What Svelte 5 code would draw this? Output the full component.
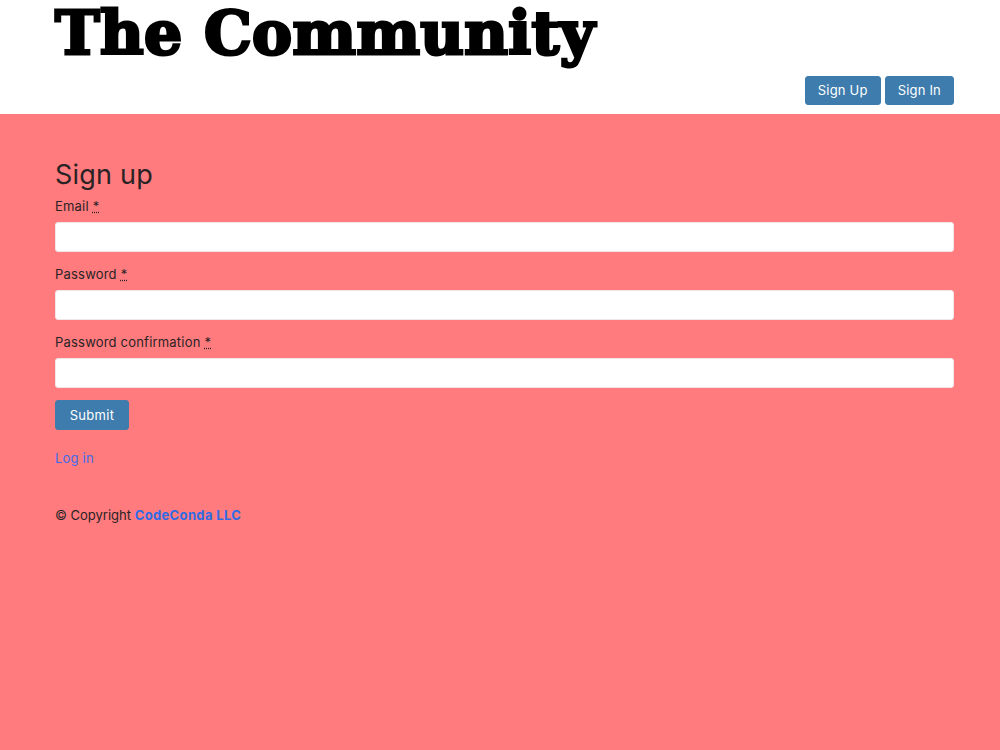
<script>
  const fields = [
    { label: 'Email', type: 'email' },
    { label: 'Password', type: 'password' },
    { label: 'Password confirmation', type: 'password' }
  ];
</script>

<header class="site-header">
  <div class="container">
    <h1 class="brand">The Community</h1>
    <nav class="actions">
      <a class="btn" href="#signup">Sign Up</a>
      <a class="btn" href="#signin">Sign In</a>
    </nav>
  </div>
</header>

<main class="content">
  <div class="container">
    <h2>Sign up</h2>
    <form on:submit|preventDefault>
      {#each fields as field}
        <div class="field">
          <label>
            <span class="label-text">{field.label} <abbr title="required">*</abbr></span>
            <input type={field.type} />
          </label>
        </div>
      {/each}
      <button class="btn" type="submit">Submit</button>
    </form>
    <a class="login" href="#login">Log in</a>
    <footer>© Copyright <a href="#codeconda">CodeConda LLC</a></footer>
  </div>
</main>

<style>
  :global(body) {
    margin: 0;
    background: #ff7b7d;
    font-family: Inter, "Open Sans", sans-serif;
    color: #2a2326;
    letter-spacing: 0.2px;
  }

  .container {
    padding: 0 46px 0 55px;
  }

  .site-header {
    background: #fff;
    height: 114px;
  }

  .brand {
    margin: 0 0 10px;
    font-family: "DejaVu Serif", serif;
    font-size: 60px;
    font-weight: 700;
    line-height: 66px;
    letter-spacing: 0.4px;
    color: #000;
    -webkit-text-stroke: 3px #000;
  }

  .actions {
    display: flex;
    justify-content: flex-end;
    gap: 4px;
  }

  .btn {
    display: inline-block;
    box-sizing: border-box;
    height: 29px;
    padding: 0 12px;
    border: 1px solid #3d7cac;
    border-radius: 3px;
    background: #3d7cac;
    color: #fff;
    font: 400 13px/27px Inter, sans-serif;
    text-decoration: none;
  }

  .content {
    min-height: 636px;
    padding-top: 45px;
    box-sizing: border-box;
  }

  h2 {
    margin: 0 0 5px;
    font-size: 27px;
    font-weight: 400;
    line-height: 32px;
    color: #2a2326;
  }

  .field {
    margin-bottom: 12px;
  }

  label {
    display: block;
  }

  .label-text {
    display: block;
    font-size: 13px;
    line-height: 20px;
    margin-bottom: 6px;
  }

  abbr {
    text-decoration: underline dotted;
  }

  input {
    display: block;
    box-sizing: border-box;
    width: 100%;
    height: 30px;
    border: 1px solid #f0e6e7;
    border-radius: 3px;
    background: #fff;
  }

  button.btn {
    width: 74px;
    height: 30px;
    padding: 0;
    display: block;
    text-align: center;
    letter-spacing: 0.3px;
  }

  .login {
    display: block;
    margin-top: 18px;
    font-size: 13px;
    line-height: 20px;
    color: #3f6bea;
    text-decoration: none;
  }

  footer {
    margin-top: 37px;
    font-size: 13px;
    line-height: 20px;
    letter-spacing: 0;
  }

  footer a {
    color: #2f6be4;
    font-weight: 700;
    letter-spacing: 0.35px;
    text-decoration: none;
  }
</style>
